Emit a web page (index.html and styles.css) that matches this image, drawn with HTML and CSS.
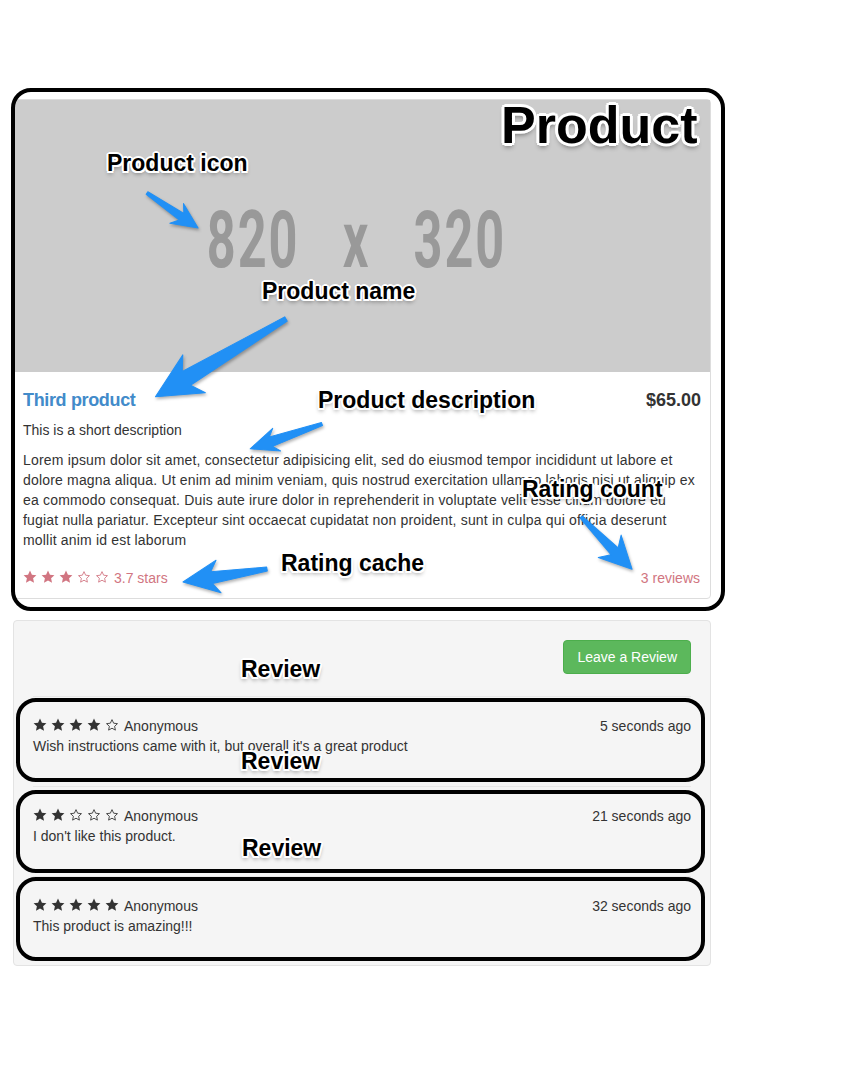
FILE: index.html
```html
<!DOCTYPE html>
<html>
<head>
<meta charset="utf-8">
<title>Product</title>
<link rel="stylesheet" href="styles.css">
</head>
<body>
<svg class="defs" width="0" height="0" aria-hidden="true">
  <defs>
    <symbol id="star-full" viewBox="0 0 24 24">
      <path d="M12 1l3.3 7.1 7.7.9-5.7 5.3 1.6 7.7L12 18.1l-6.9 3.9 1.6-7.7L1 9l7.7-.9z" fill="currentColor"/>
    </symbol>
    <symbol id="star-empty" viewBox="0 0 24 24">
      <path d="M12 2.8l2.8 6.1 6.6.8-4.9 4.5 1.3 6.6L12 17.5l-5.8 3.3 1.3-6.6-4.9-4.5 6.6-.8z" fill="none" stroke="currentColor" stroke-width="1.5" stroke-linejoin="round"/>
    </symbol>
  </defs>
</svg>

<div class="page">
  <div class="thumbnail">
    <div class="placeholder"><span class="ph-text">820 x 320</span></div>
    <div class="caption">
      <div class="title-row">
        <h4 class="name"><a href="#">Third product</a></h4>
        <h4 class="price">$65.00</h4>
      </div>
      <p class="short">This is a short description</p>
      <p class="long">Lorem ipsum dolor sit amet, consectetur adipisicing elit, sed do eiusmod tempor incididunt ut labore et dolore magna aliqua. Ut enim ad minim veniam, quis nostrud exercitation ullamco laboris nisi ut aliquip ex ea commodo consequat. Duis aute irure dolor in reprehenderit in voluptate velit esse cillum dolore eu fugiat nulla pariatur. Excepteur sint occaecat cupidatat non proident, sunt in culpa qui officia deserunt mollit anim id est laborum</p>
      <div class="ratings">
        <p class="rating"><span class="stars"><svg class="star"><use href="#star-full"/></svg><svg class="star"><use href="#star-full"/></svg><svg class="star"><use href="#star-full"/></svg><svg class="star"><use href="#star-empty"/></svg><svg class="star"><use href="#star-empty"/></svg></span>3.7 stars</p>
        <p class="count">3 reviews</p>
      </div>
    </div>
  </div>

  <div class="well">
    <div class="actions"><a class="btn" href="#">Leave a Review</a></div>
    <hr>
    <div class="review">
      <div class="review-head">
        <span class="who"><span class="stars"><svg class="star"><use href="#star-full"/></svg><svg class="star"><use href="#star-full"/></svg><svg class="star"><use href="#star-full"/></svg><svg class="star"><use href="#star-full"/></svg><svg class="star"><use href="#star-empty"/></svg></span>Anonymous</span>
        <span class="time">5 seconds ago</span>
      </div>
      <p>Wish instructions came with it, but overall it's a great product</p>
    </div>
    <hr>
    <div class="review">
      <div class="review-head">
        <span class="who"><span class="stars"><svg class="star"><use href="#star-full"/></svg><svg class="star"><use href="#star-full"/></svg><svg class="star"><use href="#star-empty"/></svg><svg class="star"><use href="#star-empty"/></svg><svg class="star"><use href="#star-empty"/></svg></span>Anonymous</span>
        <span class="time">21 seconds ago</span>
      </div>
      <p>I don't like this product.</p>
    </div>
    <hr>
    <div class="review">
      <div class="review-head">
        <span class="who"><span class="stars"><svg class="star"><use href="#star-full"/></svg><svg class="star"><use href="#star-full"/></svg><svg class="star"><use href="#star-full"/></svg><svg class="star"><use href="#star-full"/></svg><svg class="star"><use href="#star-full"/></svg></span>Anonymous</span>
        <span class="time">32 seconds ago</span>
      </div>
      <p>This product is amazing!!!</p>
    </div>
  </div>
</div>

<div class="annotations">
  <div class="box box-product"></div>
  <div class="box box-review r1"></div>
  <div class="box box-review r2"></div>
  <div class="box box-review r3"></div>

  <svg class="arrows" width="868" height="1068" viewBox="0 0 868 1068">
    <g fill="#2190f5" stroke="#2190f5" stroke-width="1" stroke-linejoin="round">
      <path transform="translate(147 193) rotate(34.5)" d="M0,-1.5 L42,-4 L36,-12 L62,0 L36,12 L42,4 L0,1.5 Z"/>
      <path transform="translate(286 319) rotate(149.2)" d="M0,-2.5 L116,-8 L107,-22 L152,0 L107,22 L116,8 L0,2.5 Z"/>
      <path transform="translate(322 424) rotate(160.9)" d="M0,-1.5 L54,-5 L48,-12 L76,0 L48,12 L54,5 L0,1.5 Z"/>
      <path transform="translate(581 517) rotate(45.6)" d="M0,-1.5 L48,-5 L41,-16 L73,0 L41,16 L48,5 L0,1.5 Z"/>
      <path transform="translate(267 569) rotate(171.2)" d="M0,-2 L56,-6 L49,-16.5 L85,0 L49,16.5 L56,6 L0,2 Z"/>
    </g>
  </svg>

  <span class="label label-big">Product</span>
  <span class="label l-icon">Product icon</span>
  <span class="label l-name">Product name</span>
  <span class="label l-desc">Product description</span>
  <span class="label l-count">Rating count</span>
  <span class="label l-cache">Rating cache</span>
  <span class="label l-rev1">Review</span>
  <span class="label l-rev2">Review</span>
  <span class="label l-rev3">Review</span>
</div>
</body>
</html>
```

FILE: styles.css
```css
* { box-sizing: border-box; }

html, body {
  margin: 0;
  background: #fff;
}

body {
  position: relative;
  width: 868px;
  height: 1068px;
  overflow: hidden;
  font-family: "Liberation Sans", Arial, sans-serif;
  font-size: 14px;
  line-height: 20px;
  color: #333;
}

.defs {
  position: absolute;
  width: 0;
  height: 0;
  overflow: hidden;
}

p { margin: 0; }

.page {
  width: 711px;
  padding: 99px 0 0 13px;
}

/* ---------- product thumbnail ---------- */
.thumbnail {
  border: 1px solid #ddd;
  border-radius: 4px;
  background: #fff;
  margin-bottom: 21px;
}

.placeholder {
  height: 272px;
  background: #ccc;
  display: flex;
  align-items: center;
  justify-content: center;
  padding: 7px 12px 0 0;
  overflow: hidden;
}

.ph-text {
  display: inline-block;
  font-family: Roboto, "Liberation Sans", sans-serif;
  font-weight: 700;
  font-size: 80px;
  line-height: 80px;
  color: #999;
  letter-spacing: 3px;
  word-spacing: 46px;
  white-space: nowrap;
  transform: scaleX(0.63);
}

.caption {
  padding: 18px 9px 10px;
}

.title-row {
  display: flex;
  justify-content: space-between;
  align-items: baseline;
  margin-bottom: 10px;
}

h4 {
  margin: 0;
  font-size: 18px;
  line-height: 20px;
  font-weight: 700;
}

.name a {
  color: #428bca;
  text-decoration: none;
  letter-spacing: -0.35px;
}

.price { color: #333; }

.short { margin-bottom: 10px; }

.long { letter-spacing: 0.18px; }

.ratings {
  display: flex;
  justify-content: space-between;
  margin-top: 18px;
  color: #d17581;
}

.count { margin-right: 1px; }

.stars {
  display: inline-flex;
  gap: 4px;
  margin-right: 5px;
  vertical-align: -1px;
}

.star {
  width: 14px;
  height: 14px;
  display: block;
}

/* ---------- reviews well ---------- */
.well {
  background: #f5f5f5;
  border: 1px solid #e3e3e3;
  border-radius: 4px;
  padding: 19px;
}

.actions {
  display: flex;
  justify-content: flex-end;
  padding-bottom: 2px;
}

.btn {
  display: block;
  background: #5cb85c;
  border: 1px solid #4cae4c;
  border-radius: 4px;
  color: #fff;
  padding: 6px 13px;
  font-size: 14px;
  line-height: 20px;
  text-decoration: none;
}

hr {
  border: 0;
  border-top: 1px solid #e8e8e8;
  margin: 20px 0 19px;
}

.review { padding-bottom: 10px; }

.review-head {
  display: flex;
  justify-content: space-between;
}

/* ---------- annotations overlay ---------- */
.annotations {
  position: absolute;
  left: 0;
  top: 0;
  width: 868px;
  height: 1068px;
  pointer-events: none;
}

.box {
  position: absolute;
  border: 4px solid #000;
  border-radius: 20px;
}

.box-product { left: 11px; top: 88px; width: 714px; height: 523px; }
.box-review { left: 16px; width: 689px; height: 84px; }
.box-review.r1 { top: 698px; }
.box-review.r2 { top: 790px; height: 83px; }
.box-review.r3 { top: 877px; }

.arrows {
  position: absolute;
  left: 0;
  top: 0;
  filter: drop-shadow(1px 2px 1.5px rgba(0, 0, 0, 0.3));
}

.label {
  position: absolute;
  font-family: "Liberation Sans", Arial, sans-serif;
  font-weight: 700;
  font-size: 23px;
  line-height: 23px;
  color: #000;
  white-space: nowrap;
  text-shadow:
    2px 0 0 #fff, -2px 0 0 #fff, 0 2px 0 #fff, 0 -2px 0 #fff,
    1.5px 1.5px 0 #fff, -1.5px 1.5px 0 #fff, 1.5px -1.5px 0 #fff, -1.5px -1.5px 0 #fff,
    0 3px 4px rgba(0, 0, 0, 0.45);
}

.label-big {
  left: 501px;
  top: 99px;
  font-size: 52px;
  line-height: 52px;
  text-shadow:
    3px 0 0 #fff, -3px 0 0 #fff, 0 3px 0 #fff, 0 -3px 0 #fff,
    2.2px 2.2px 0 #fff, -2.2px 2.2px 0 #fff, 2.2px -2.2px 0 #fff, -2.2px -2.2px 0 #fff,
    0 4px 5px rgba(0, 0, 0, 0.45);
}

.l-icon  { left: 107px; top: 152px; }
.l-name  { left: 262px; top: 280px; }
.l-desc  { left: 318px; top: 389px; }
.l-count { left: 522px; top: 478px; }
.l-cache { left: 281px; top: 552px; }
.l-rev1  { left: 241px; top: 658px; }
.l-rev2  { left: 241px; top: 750px; }
.l-rev3  { left: 242px; top: 837px; }
```
